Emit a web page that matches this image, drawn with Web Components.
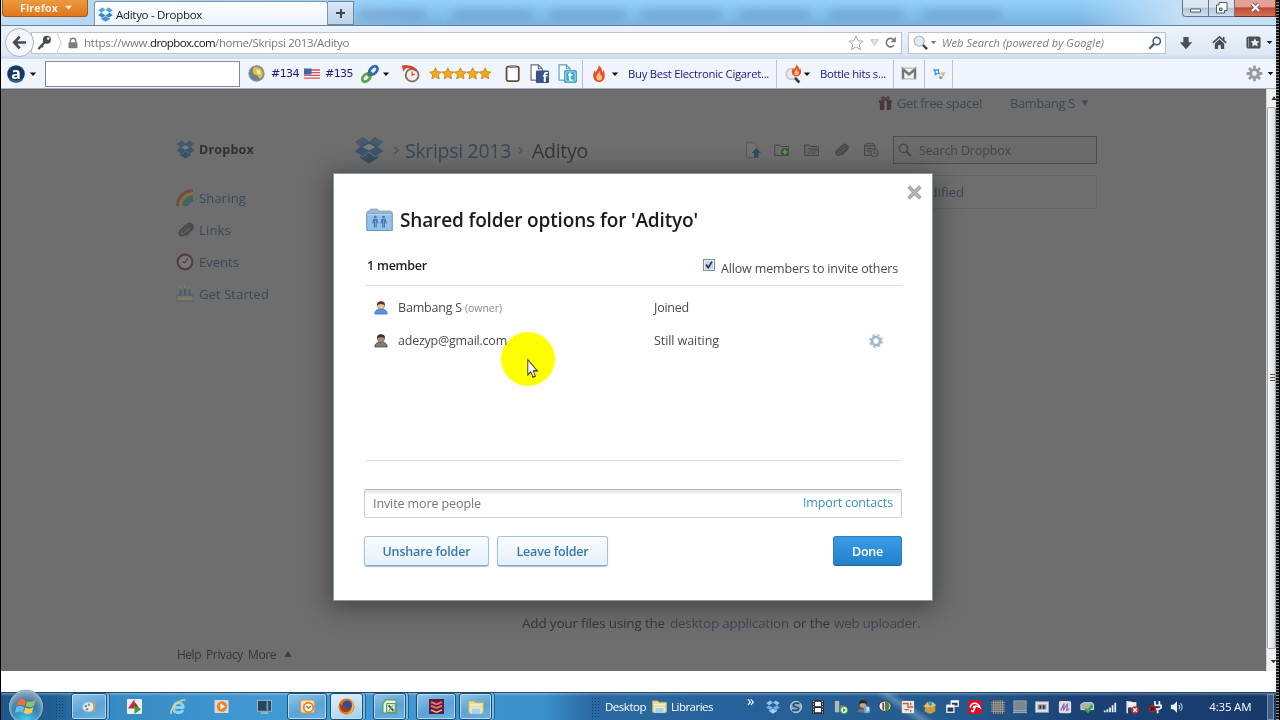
<!DOCTYPE html>
<html lang="en">
<head>
<meta charset="utf-8">
<title>Adityo - Dropbox</title>
<style>
    html, body {
        margin: 0;
        width: 1280px;
        height: 720px;
        overflow: hidden;
        background: #000;
        font-family: "Open Sans", "Noto Sans", sans-serif;
        font-size: 12px;
    }
</style>
</head>
<body>
<desktop-screen></desktop-screen>

<script>
/*            ICONS            */
/* all drawn on a 16x16 grid   */
const dropboxShape = (a, b, c) => `
    <path fill="${a}" d="M4.800 .500 8 3.200 3.400 6.100 .300 3.400zM11.200 .500 15.700 3.400 12.600 6.100 8 3.200z"/>
    <path fill="${b}" d="M.300 8.900 3.400 6.100 8 8.900 4.800 11.500zM15.700 8.900 12.600 6.100 8 8.900 11.200 11.500z"/>
    <path fill="${c}" d="M3.400 11.200 4.800 12.100 8 9.500 11.200 12.100 12.600 11.200V12.700L8 15.700 3.400 12.700z"/>`;

const clip = (c, w) => `<g fill="none" stroke="${c}" stroke-width="${w}" stroke-linecap="round">
    <path d="M5.500 10.500 11 5.200c1.600-1.400 3.200.400 1.800 1.900L7.400 12.200c-2.600 2.300-5.900-.800-3.400-3.500L9.600 3.500c3.200-2.800 7 .900 4.400 4.200L9.500 12"/></g>`;

const person = (hair, skin, body, edge) => `
    <path fill="${body}" stroke="${edge}" d="M1 14.800C1 10.800 3.400 9.400 8 9.400s7 1.400 7 5.400z"/>
    <circle cx="8" cy="5.400" r="4" fill="${skin}" stroke="${edge}" stroke-width=".600"/>
    <path fill="${hair}" d="M3.600 5.600C3 1.600 5.400.400 8 .400s5 1.200 4.400 5.200C11 3.400 9.500 3.600 8 3.600S5 3.400 3.600 5.600z"/>`;

const page = c => `<path fill="#fff" stroke="${c}" d="M.900.700H7L10.300 4V13.500H.900z"/><path fill="none" stroke="${c}" d="M7 .700V4H10.300"/>`;

const flame = `<path fill="#e4502a" d="M7.500 0C8.500 3 5 4.500 4.500 7 3.800 6.500 3.500 5.500 3.600 4.500 1.500 7 1 9.500 1.500 11.500 2.300 14.500 5 16 8 16c4 0 6.600-2.800 6.600-6.200 0-2.300-.800-4-1.600-5.300-.100 1.200-.400 2-1.200 2.500C11.600 4 10.300 1.500 7.500 0z"/>
    <path fill="#fbc27a" d="M8.400 5.500C8.500 8 5 8.600 5 11.500c0 2 1.400 3 3.200 3 2 0 3.400-1.400 3.200-3.300-.100-1-.600-1.700-1.100-2.200-.200.700-.500 1-1 1.200C9.700 8.500 9.500 6.800 8.400 5.500z"/>`;

const star = x => `<path fill="#f3ab12" stroke="#b5770d" stroke-width=".700" d="M${x} .800l1.900 4 4.300.500-3.200 2.900.900 4.300L${x} 10.300l-3.900 2.200.900-4.300L${x - 6.2} 5.300l4.300-.500z"/>`;

const gear = (c, hole) => `<g stroke="${c}" stroke-width="2.600"><path d="M8 .600V15.400M.600 8H15.400M2.800 2.800 13.200 13.200M13.200 2.800 2.800 13.200"/></g>
    <circle cx="8" cy="8" r="5" fill="${c}"/><circle cx="8" cy="8" r="2.300" fill="${hole}"/>`;

const icons = {
    dropbox: dropboxShape('#4ba3df', '#2f86c8', '#3a93d4'),
    dropboxDim: '<path fill="#2e4355" d="M3.400 6.100 8 3.200 12.600 6.100 8 8.900z"/>' + dropboxShape('#3e576b', '#34506a', '#2f4a60') + '<path fill="#75838c" d="M8 4.300 11.500 6.300 8 8.300 4.500 6.300z"/>',
    dropboxTray: dropboxShape('#8cc9f2', '#6cb2e6', '#a4d4f5'),
    caret: '<path d="M3 5.500H13L8 11z"/>',
    caretWide: '<path d="M1.500 2.500H14.500L8 13.500z"/>',
    caretUp: '<path d="M8 4 13 12H3z"/>',
    back: '<path fill="none" stroke="#444b52" stroke-width="2.900" d="M8.200 1.800 2.400 8 8.200 14.200M2.800 8H15"/>',
    key: '<circle cx="10.600" cy="5" r="4.300" fill="#4a4d51"/><circle cx="12" cy="3.700" r="1.300" fill="#fff"/><path stroke="#4a4d51" stroke-width="2.500" d="M9 6.800 1.500 15"/><path stroke="#4a4d51" stroke-width="1.500" d="M4.500 10.500 6.500 13"/>',
    chevron: '<path fill="none" stroke="#c3c8ce" stroke-width="1" d="M5 0 10 8 5 16"/>',
    lock: '<rect x="2" y="7" width="12" height="8" rx="1" fill="#7d7d7d"/><path fill="none" stroke="#7d7d7d" stroke-width="2" d="M4.500 7V4.500C4.500.500 11.500.500 11.500 4.500V7"/>',
    star: '<path fill="#fbfbfb" stroke="#a9a9a9" d="M8 1l2.100 4.700 5 .500-3.800 3.400 1.200 5L8 12l-4.500 2.600 1.200-5L.900 6.200l5-.500z"/>',
    triangle: '<path fill="#e4e4e4" stroke="#a5a5a5" d="M1 3H15L8 13.500z"/>',
    reload: '<path fill="none" stroke="#7b7b7b" stroke-width="2" d="M12.300 11.200A5.200 5.200 0 1 1 12 4.800"/><path fill="#7b7b7b" d="M14.500 1V7.600H8z"/>',
    lens: '<path stroke="#444" stroke-width="2.600" d="M10.500 10.500 15 15"/><circle cx="6.500" cy="6.500" r="5.300" fill="#dcebf4" stroke="#b3b9be" stroke-width="1.400"/>',
    searchGo: '<g fill="none" stroke="#3d6283"><circle cx="10" cy="5.800" r="4.200" stroke-width="1.800"/><path stroke-width="2.600" d="M7 9 1.500 14.500"/></g>',
    download: '<path fill="#4b4f54" d="M5 1H11V7H15L8 15 1 7H5z"/>',
    home: '<path fill="none" stroke="#4b4f54" stroke-width="1.800" d="M.800 8.500 8 2 15.200 8.500"/><path fill="#4b4f54" d="M8 4.500 13 9V15H9.500V11H6.500V15H3V9zM11.500 2H13.300V6L11.500 4.500z"/>',
    bookmarks: '<rect x=".500" y="1.500" width="15" height="13" rx="2" fill="#4b4f54"/><path fill="#e8eef6" d="M9.500 3.500l1.500 3 3.300.400-2.400 2.200.700 3.200-3.100-1.600-3 1.600.600-3.200L4.800 6.900 8 6.500z"/><path stroke="#9aa2aa" d="M2.800 3V13"/>',
    alexa: '<circle cx="8" cy="8" r="7.800" fill="#173b62"/><path fill="#4f8db8" opacity=".600" d="M1 10.500C4 15 12 15 15 10.500A7.500 7.500 0 0 1 1 10.500"/><text x="8" y="12.200" text-anchor="middle" font-size="14" font-weight="bold" font-family="Open Sans" fill="#fff">a</text>',
    globe: '<circle cx="8" cy="8" r="7.200" fill="#6f7f93" stroke="#8d9297"/><path fill="#e2c04b" d="M5 2.500C9 .500 14 3.500 14 8c0 2-1 4-2.500 5C9 12 10 10 8 9.500 4 9 4 5 5 2.500z"/><path fill="#f8e8a0" d="M8 4l3 1 1 3-2 1-2-2z"/>',
    flag: '<rect y="2.500" width="16" height="11" fill="#f4f4f6"/><path stroke="#d2505c" stroke-width="1.300" d="M0 4H16M0 6.700H16M0 9.400H16M0 12.200H16"/><rect y="2.500" width="7.500" height="6" fill="#4163a8"/>',
    links: '<g fill="none" stroke-width="2.500"><ellipse cx="4.800" cy="11.200" rx="2.800" ry="4.400" transform="rotate(45 4.800 11.200)" stroke="#5aa83f"/><ellipse cx="11" cy="4.800" rx="2.800" ry="4.400" transform="rotate(45 11 4.800)" stroke="#2f69b8"/><path stroke="#3a7f74" d="M6 9.800 9.600 6.200"/></g>',
    wayback: '<circle cx="9" cy="9" r="5.700" fill="#f2ece6" stroke="#8d6f64" stroke-width="1.700"/><path fill="none" stroke="#b45546" d="M9 5.500V9L11.500 8"/><path fill="none" stroke="#d8402a" stroke-width="2.200" d="M2 2C6 .800 10 2 12.500 5"/><path fill="#d8402a" d="M0 .500 5 0 1 6z"/>',
    clipboard: '<rect x="2.400" y="1.600" width="11.500" height="13.600" rx="1.500" fill="#fff" stroke="#6b4b37" stroke-width="1.700"/><rect x="5" y=".300" width="6" height="2.500" fill="#8e8e8e"/>',
    pageFb: page('#66727e') + '<rect x="5" y="5.500" width="11" height="10.500" rx="1" fill="#34548b"/><text x="10.500" y="15.500" font-size="11" font-weight="bold" font-family="Open Sans" fill="#fff">f</text>',
    pageTw: page('#57a3bf') + '<rect x="5" y="5" width="11" height="11" rx="1.500" fill="#3fa9ce"/><rect x="6.500" y="6.500" width="8" height="8" rx="1.500" fill="none" stroke="#9bd5e8"/><text x="8.200" y="14" font-size="10" font-weight="bold" font-family="Open Sans" fill="#fff">t</text>',
    flame: flame,
    flameLens: '<circle cx="6" cy="8" r="4.800" fill="#e9ecef" stroke="#c4c7cb" stroke-width="1.500"/><path stroke="#3c3c3c" stroke-width="2.500" d="M9.500 11.500 13.500 15.500"/><g transform="translate(5.500 -.500) scale(.660)">' + flame + '</g>',
    gmail: '<rect x=".800" y="2" width="14.400" height="12" fill="#f5f5f5"/><path fill="none" stroke="#777" stroke-width="2.500" d="M2 14V3.500L8 9 14 3.500V14"/><path stroke="#aaa" d="M1 2.300H15M1 13.700H15"/>',
    sparkle: '<path fill="#3aa5dd" d="M1 2 5 3 8 2 8 6 10 9 6 9 3 11 3 7z"/><circle cx="5.600" cy="6" r="1.300" fill="#fff"/><path fill="#eeb15a" d="M10 6 13 7 16 6 14 9 14 12 11.500 10z"/><circle cx="10" cy="13" r="2" fill="#8b99a8"/>',
    gear: gear('#999b9e', '#eef2fb'),
    gearBlue: '<circle cx="8" cy="8" r="6.500" fill="none" stroke="#b4c8da" stroke-width="3" stroke-dasharray="3.100 2"/><circle cx="8" cy="8" r="4.600" fill="#dfe9f2" stroke="#9db6cd" stroke-width="2.600"/><circle cx="8" cy="8" r="2.200" fill="#fff"/>',

    gift: '<path fill="#472d35" d="M2 7H14V15H2zM1 4.500H15V7.500H1z"/><path fill="#77737a" d="M6.700 4.500H9.300V15H6.700z"/><path fill="none" stroke="#4a2f37" stroke-width="1.500" d="M8 4.500C2 4 4 0 6 1.500 7 2.200 8 4 8 4.500 8 4 9 2.200 10 1.500 12 0 14 4 8 4.500z"/>',
    rainbow: '<g fill="none" stroke-width="2.800"><path stroke="#74463f" d="M1.500 15C1.500 8 6 2 15 1.500"/><path stroke="#85733e" d="M4 15C4.400 9.500 8 5 15 4.200"/><path stroke="#3e6547" d="M6.500 15C7 11 10 8 15 7"/><path stroke="#3c5c73" d="M9.300 15C10 12 12 10.500 15 9.700"/></g>',
    linkDim: clip('#454545', 1.9),
    event: '<circle cx="8" cy="8" r="6.500" fill="#7c7c7c" stroke="#573232" stroke-width="2"/><path fill="none" stroke="#454545" stroke-width="1.300" d="M10.500 4.500 8 8.500 5.500 8"/>',
    started: '<path fill="#747571" stroke="#5a6066" d="M1 9H15V14.500H1z"/><path stroke="#405a70" stroke-width="1.800" d="M4 9V4M8 9V3.500M12 9V4"/><path stroke="#858263" stroke-width="1.500" d="M3.200 2.500H4.800M7.200 1.500H8.800M11.200 2.500H12.800M1 12H15"/>',
    crumb: '<path fill="none" stroke="#4e4e4e" stroke-width="2.600" d="M4.500 2.500 11 8 4.500 13.500"/>',
    upload: '<path fill="#747474" stroke="#505050" stroke-width=".800" d="M1.500 .700H8.500L12 4V15.300H1.500z"/><path fill="#244764" d="M11.300 6 16 11H13.500V15.500H9V11H6.600z"/>',
    newFolder: '<path fill="#6c6c6c" stroke="#404040" d="M.700 13.500V3H5.500L7 4.500H14.500V13.500z"/><circle cx="11" cy="10" r="4" fill="#35512f"/><path stroke="#809078" stroke-width="1.500" d="M11 7.500V12.500M8.500 10H13.500"/>',
    shareFolder: '<path fill="#676767" stroke="#424242" d="M.700 13.500V3H5.500L7 4.500H14.500V13.500z"/><path fill="none" stroke="#474747" d="M4 12 8 6.500M7 12 11 6.500M9.500 12 13.500 7M4 7H14"/>',
    trash: '<path fill="#686868" stroke="#404040" d="M1.500 3.500C1.500.500 12 .500 12 3.500V13.500H1.500zM1.500 3.800H12"/><circle cx="11.500" cy="11" r="3.700" fill="#6c6c6c" stroke="#3e3e3e"/><path stroke="#404040" d="M4 6.500H9M4 9H7"/><path fill="none" stroke="#404040" d="M11.500 9V11.500H13.500"/>',
    searchDim: '<g fill="none" stroke="#434343"><circle cx="6.200" cy="6.200" r="4.700" stroke-width="1.700"/><path stroke-width="2.400" d="M9.700 9.700 15 15"/></g>',

    sharedFolder: '<path fill="#9dbcd3" stroke="#7f9db5" stroke-width=".500" d="M.500 15V2.800L1.200 2H2L2.700.700H6.800L7.700 2H14.800L15.500 2.800V15z"/><path fill="#93c3ec" stroke="#648db3" stroke-width=".500" d="M.500 3.800H15.500V15H.500z"/><path stroke="#c8e4fb" stroke-width=".500" d="M.800 4.300H15.200"/><g fill="#4a78a8"><circle cx="5.500" cy="6" r=".900"/><circle cx="10.400" cy="6" r=".900"/></g><path fill="none" stroke="#4a78a8" stroke-width=".700" d="M5 13V7.600M6 13V7.600M3.900 10.200 4.600 7.500H6.400L7.100 10.200M9.900 13V7.600M10.900 13V7.600M8.800 10.200 9.500 7.500H11.300L12 10.200"/>',
    owner: person('#5b3420', '#f4c28f', '#5a95e3', '#3b6fb4'),
    member: person('#38332e', '#a28f7d', '#807c75', '#504c47'),
    close: '<path stroke="#a4a4a4" stroke-width="4" d="M1.700 1.700 14.300 14.300M14.300 1.700 1.700 14.300"/><path stroke="#bcbcbc" stroke-width="1.500" d="M2 2 14 14M14 2 2 14"/>',
    check: '<rect x=".600" y=".600" width="14.800" height="14.800" fill="#e9eef3" stroke="#788696" stroke-width="1.200"/><rect x="2.600" y="2.600" width="10.800" height="10.800" fill="#cbd5e2"/><path fill="none" stroke="#273c66" stroke-width="2.400" d="M4 7.500 7 11.500 12 3.500"/>',
    pointer: '<path fill="#fff" stroke="#222" stroke-width=".900" d="M3 .600V13.500L6.200 10.800 8.500 15.400 11 14.400 8.900 10H13.200z"/>',

    paint: '<ellipse cx="7" cy="8.500" rx="6.500" ry="5.300" fill="#dfeaf2" stroke="#a3bccd"/><g><circle cx="4" cy="7.500" r="1.400" fill="#4d9bd0"/><circle cx="7.500" cy="6" r="1.300" fill="#67b556"/><circle cx="5.500" cy="11" r="1.300" fill="#d0675a"/></g><path stroke="#d09c55" stroke-width="2.200" d="M13 2V14"/>',
    cards: '<rect width="16" height="16" rx="1" fill="#e8eef1"/><path fill="#c92a2f" d="M8 0V10H1z"/><path fill="#3f9b3a" d="M8 5 15 11 8 16z"/><path fill="#8f1f25" d="M8 3 12 8H8z"/>',
    ie: '<path fill="none" stroke="#8ed4f2" stroke-width="3" d="M3 8.500H13C13 1.500 3.500 2.500 3.500 9 3.500 14.500 11 15 12.800 11"/><path fill="none" stroke="#ead374" stroke-width="1.500" d="M1.500 15C-1 12 8 0 15.500 1"/>',
    media: '<rect x=".500" y="1" width="15" height="14" rx="1" fill="#d3dbe0"/><circle cx="8.500" cy="8" r="5.500" fill="#ee8420"/><path fill="#fff" d="M6.800 4.800 12 8 6.800 11.200z"/>',
    monitor: '<rect x=".500" y="1.500" width="15" height="11.500" fill="#24465e" stroke="#a7b6c0"/><path fill="#6c9dbc" d="M10 2.500H12V12H10z"/><path stroke="#aebac3" stroke-width="1.500" d="M4 15H12"/>',
    outlook: '<rect x=".500" y="1" width="15" height="14" rx="3" fill="#efdfb4" stroke="#cf9c43"/><circle cx="9" cy="9" r="5" fill="#fff" stroke="#e48a2a" stroke-width="2"/><path fill="none" stroke="#c56720" stroke-width="1.500" d="M6.500 7.500 9 10 11.500 7.500"/>',
    firefox: '<circle cx="8" cy="8" r="7.500" fill="#e5761c"/><circle cx="8.500" cy="6.800" r="4.500" fill="#2f4e93"/><path fill="#a83d18" d="M1 5C3 7 4 7 7 7.500 5.500 11 9.500 12 13 8.500 12 14 4 15 2.500 10z"/><path fill="#f7bd3b" d="M13 2.500C17 8 14 15 8 15.500 13 13 14 8 13 2.500z"/>',
    excel: '<path fill="#e8f4e6" stroke="#5ba057" stroke-width="1.300" d="M4.500 1H15V15H1V4.500z"/><rect x="5" y="5" width="9" height="9" fill="#fff" stroke="#397c42"/><path stroke="#236a35" stroke-width="2.200" d="M7 6.800 12.300 12.500"/><path stroke="#67a975" stroke-width="1.500" d="M12 6.800 7 12.500"/>',
    purple: '<rect width="16" height="16" fill="#5c1950"/><path fill="none" stroke="#eb7547" stroke-width="2" d="M2 3.500C5 3.500 6 5.500 8 5.500S11 3.500 14 3.500M2 7.500C5 7.500 6 9.500 8 9.500S11 7.500 14 7.500"/><path fill="none" stroke="#f2c45e" stroke-width="1.500" d="M2 12C5 12 6 14 8 14S11 12 14 12"/>',
    folder: '<path fill="#e8dc9a" stroke="#c0ac61" d="M.600 14V2H6L7.500 3.500H15.400V14z"/><path fill="#a8d2e4" stroke="#e9f3f1" d="M3 15V9H13V15"/><path stroke="#f5efc5" stroke-width="1.500" d="M2 6H14"/>',

    skype: '<circle cx="8" cy="8" r="6.500" fill="#8caec6" stroke="#bdd3e1"/><path fill="none" stroke="#284d70" stroke-width="2" d="M12 4C5 2 2 7 8 8S11 13 3.500 11.500"/>',
    film: '<rect x="1.500" y=".500" width="13" height="15" fill="#1c1c1c"/><path fill="#fff" d="M4.500 2H11.500V7H4.500zM4.500 9H11.500V14H4.500z"/><path stroke="#fff" stroke-dasharray="1.500 1.500" d="M3 1V15M13 1V15"/>',
    device: '<path fill="#aeb8b7" d="M1 1H6V14H1z"/><path fill="#707f7a" d="M7 6H12V14H7z"/><circle cx="11.500" cy="11.500" r="4" fill="#e8ffe5" stroke="#469846"/><path fill="#31852e" d="M10.500 9 13.500 11.500 10.500 14z"/>',
    agent: person('#252525', '#dca27e', '#62788f', '#394a5a') + '<rect x="9" y="7" width="7" height="8" rx="2" fill="#6ba3c9"/><path fill="none" stroke="#e2f0fa" stroke-width="1.500" d="M11 9H14V11.500H12.500V13"/>',
    eye: '<ellipse cx="8" cy="7" rx="7" ry="6" fill="#efefef" stroke="#222"/><path fill="#478942" d="M8 1C15 1 15 11 8 14z"/><path stroke="#913369" stroke-width="2" d="M6 3V11"/>',
    schedule: '<rect x="1" y="1" width="14" height="14" fill="#ece8e5"/><path fill="none" stroke="#c16342" stroke-width="1.500" d="M2 4H8V8H14M4 11H9M11 3V6M11 11V14"/>',
    box: '<path fill="#cd9a3d" d="M2 6 8 9 14 6V13L8 16 2 13z"/><path fill="#e7bf64" d="M2 6 5 2 8 5 11 2 15 6 9 9 8 8 7 9 0 7z"/><path fill="#4a9bc5" d="M5 3 9 1 11 5 8 7z"/>',
    windows: '<g fill="#233a56" stroke="#f5f5f5" stroke-width="1.500"><rect x="6" y="1" width="8" height="6"/><rect x="1" y="6" width="8" height="8"/></g><path fill="#fff" d="M1 6H9V8.500H1zM6 1H14V3H6z"/>',
    avira: '<rect width="16" height="16" rx="1" fill="#d41424"/><path fill="none" stroke="#fff" stroke-width="1.800" d="M2.500 8.500C4 2.500 11 2 13.500 8.500 10.500 6.500 7.500 6.500 5.500 9M8.500 7 6.500 12C6 14 3.500 13 4.500 11.500"/>',
    grid: '<rect x=".500" y=".500" width="15" height="15" fill="#4d4f50"/><path stroke="#b4b4b1" stroke-width=".800" d="M0 3H16M0 5.500H16M0 8H16M0 10.500H16M0 13H16M3 0V16M5.500 0V16M8 0V16M10.500 0V16M13 0V16"/>',
    laptop: '<rect x="1" y="1" width="14" height="11" fill="#7b8790" stroke="#a0abb5"/><path fill="#98a7b5" d="M0 13H16V15H0z"/>',
    meter: '<rect x=".500" y="2" width="15" height="12" fill="#dfe4e6" stroke="#9da9b0"/><rect x="3" y="5" width="10" height="6" fill="#8d999f"/><path stroke="#333" stroke-width="2" d="M6 6V10M10 6V10"/>',
    note: '<rect x="1" y="1" width="14" height="14" rx="2" fill="#e3dae8"/><path fill="none" stroke="#946fae" stroke-width="1.500" d="M3 12 7 4 6 12 11 4 10 12 13 10"/>',
    drive: '<path fill="#a9b1b2" stroke="#dce2e2" d="M1 5 4 3H14L15.500 5V11H1z"/><path fill="none" stroke="#43a734" stroke-width="3" d="M6 10 9 13 14 6"/>',
    signal: '<path stroke="#e9f1f7" stroke-width="2" d="M2 14V12M5 14V10.500M8 14V8.500M11 14V6M14 14V3"/>',
    flagX: '<path stroke="#f2f2f2" stroke-width="1.700" d="M2.500 1V15"/><path fill="#f2f2f2" d="M3 2C7 0 8 4 13 2V9C8 10 7 7 3 9z"/><circle cx="11.500" cy="11.500" r="4.300" fill="#d12e2b"/><path stroke="#fff" stroke-width="1.500" d="M9.500 9.500 13.500 13.500M13.500 9.500 9.500 13.500"/>',
    plug: '<path fill="none" stroke="#f0f0f0" stroke-width="2" d="M8 1V5M13 1V5M7 6H15V9C13 11 8 11 7 9M11 10V15"/><circle cx="5" cy="10" r="4.300" fill="#a92323"/><path stroke="#222" stroke-width="1.500" d="M3 8 7 12M7 8 3 12"/>',
    sound: '<path fill="#edf3f7" d="M1 5.500H4L8 1.500V14.500L4 10.500H1z"/><path fill="none" stroke="#bcd0df" stroke-width="1.200" d="M10 5.500C11.500 7 11.500 9 10 10.500M12 3.500C14.500 6 14.500 10 12 12.500"/>'
};

/*       SMALL ELEMENTS        */
class UiIcon extends HTMLElement {
    connectedCallback() {
        if (this.shadowRoot) return;
        let size = this.getAttribute('size') || 16;
        let height = this.getAttribute('height') || size;
        this.attachShadow({mode: 'open'}).innerHTML = `
            <style>
                :host { display: block; flex: none; width: ${size}px; height: ${height}px; margin-left: ${this.getAttribute('gap') || 0}px; }
                svg { display: block; width: 100%; height: 100%; overflow: visible; }
            </style>
            <svg viewBox="0 0 16 16" preserveAspectRatio="none" fill="currentColor">${icons[this.getAttribute('name')]}</svg>`;
    }
}

// one line of text, tracked so that it fills the given width
class UiLabel extends HTMLElement {
    connectedCallback() {
        if (this.shadowRoot) return;
        let width = Number(this.getAttribute('width'));
        this.attachShadow({mode: 'open'}).innerHTML = `
            <style>
                :host { display: block; flex: none; white-space: nowrap; width: ${width}px; margin-left: ${this.getAttribute('gap') || 0}px; }
                span { display: inline-block; }
            </style>
            <span><slot></slot></span>`;
        let span = this.shadowRoot.querySelector('span');
        let natural = span.getBoundingClientRect().width;
        if (natural > 0) {
            span.style.letterSpacing = (width - natural) / this.textContent.length + 'px';
        }
    }
}

class UiButton extends HTMLElement {
    connectedCallback() {
        this.attachShadow({mode: 'open'}).innerHTML = `
            <style>
                :host { display: block; flex: none; }
                button {
                    display: flex;
                    align-items: center;
                    justify-content: center;
                    box-sizing: border-box;
                    width: 100%;
                    height: 30px;
                    padding: 0;
                    border: 1px solid #a3c3da;
                    border-bottom-color: #87abc5;
                    border-radius: 3px;
                    background: linear-gradient(#fbfdff, #e3f1fb);
                    box-shadow: 0 1px 1px #a5bfd0;
                    font: 600 12.5px "Open Sans", sans-serif;
                    color: #3a77ab;
                }
                :host([primary]) button {
                    border-color: #2a7fc2;
                    border-bottom-color: #1e639c;
                    background: linear-gradient(#3a9be6, #2480cb);
                    box-shadow: none;
                    color: #fff;
                }
            </style>
            <button><slot></slot></button>`;
    }
}

/*           BROWSER           */
class BrowserTabs extends HTMLElement {
    connectedCallback() {
        this.attachShadow({mode: 'open'}).innerHTML = `
            <style>
                :host {
                    display: flex;
                    box-sizing: border-box;
                    height: 26px;
                    position: relative;
                    overflow: hidden;
                    border-bottom: 1px solid #64839f;
                    background: linear-gradient(90deg, #c4dff4 0, #b5d6f1 90px, transparent 420px, transparent 1080px, #c3e0f5 1180px), linear-gradient(#92d0fb, #7ab2e0);
                }
                /* titles of other windows seen through the glass */
                .smudge { position: absolute; top: 10px; height: 9px; background: #5f89b5; opacity: .45; filter: blur(4px); }
                .firefox {
                    display: flex;
                    align-items: center;
                    width: 86px;
                    height: 17px;
                    margin-left: 1px;
                    padding-bottom: 1px;
                    box-sizing: border-box;
                    border: 1px solid #a85a17;
                    border-top: 0;
                    border-radius: 0 0 4px 4px;
                    background: linear-gradient(#ec9a40, #e2761a);
                    color: #fdf3e6;
                    font-size: 10.5px;
                    font-weight: 700;
                }
                .tab {
                    display: flex;
                    align-items: center;
                    width: 234px;
                    height: 25px;
                    margin: 1px 0 0 6px;
                    border: 1px solid #8096ab;
                    border-bottom: 0;
                    border-radius: 3px 3px 0 0;
                    background: linear-gradient(#fcfdff, #edf3fb);
                    box-sizing: border-box;
                    color: #1b1b1b;
                    font-size: 11.5px;
                }
                .add {
                    width: 26px;
                    height: 24px;
                    margin-top: 1px;
                    border: 1px solid #6f8aa5;
                    border-left: 0;
                    box-sizing: border-box;
                    background: linear-gradient(#d7e7f5, #bdd3e8);
                    display: flex;
                    align-items: center;
                    justify-content: center;
                }
                .add i { width: 9px; height: 9px; background: linear-gradient(#444, #444) center / 9px 2px no-repeat, linear-gradient(#444, #444) center / 2px 9px no-repeat; }
                .controls { display: flex; margin-left: auto; height: 17px; position: relative; }
                .controls span {
                    display: flex;
                    align-items: center;
                    justify-content: center;
                    box-sizing: border-box;
                    width: 26px;
                    border: 1px solid #62798f;
                    border-width: 0 1px 1px 0;
                    background: linear-gradient(#dbe8f3 45%, #b3c6d8 50%, #cedeed);
                }
                .controls span:first-child { width: 27px; border-left-width: 1px; border-radius: 0 0 0 4px; }
                .controls .close { width: 41px; background: linear-gradient(#e3a295 40%, #c54a33 50%, #d27058); border-color: #712f28; }
                .controls svg { width: 13px; height: 12px; }
            </style>
            <i class="smudge" style="left:358px;width:66px"></i>
            <i class="smudge" style="left:452px;width:80px"></i>
            <i class="smudge" style="left:548px;width:76px"></i>
            <i class="smudge" style="left:640px;width:80px"></i>
            <i class="smudge" style="left:738px;width:70px"></i>
            <i class="smudge" style="left:828px;width:74px"></i>
            <i class="smudge" style="left:922px;width:78px"></i>
            <div class="firefox"><ui-label gap="17" width="38">Firefox</ui-label><ui-icon name="caret" gap="5" size="11"></ui-icon></div>
            <div class="tab"><ui-icon name="dropbox" gap="3" size="15"></ui-icon><ui-label gap="3" width="86">Adityo - Dropbox</ui-label></div>
            <div class="add"><i></i></div>
            <div class="controls">
                <span><svg viewBox="0 0 13 12"><path fill="#fff" stroke="#4c5968" d="M1.500 7H11.500V10H1.500z"/></svg></span>
                <span><svg viewBox="0 0 13 12"><path fill="#fff" fill-rule="evenodd" stroke="#4c5968" d="M4 .500H12V8.500H9.500V11H1.500V3H4zM4.500 6V8.500H7V6z"/></svg></span>
                <span class="close"><svg viewBox="0 0 13 12"><path stroke="#654" stroke-width="4" d="M3 2 10 9M10 2 3 9"/><path stroke="#fff" stroke-width="2.300" d="M3 2 10 9M10 2 3 9"/></svg></span>
            </div>`;
    }
}

class BrowserNav extends HTMLElement {
    connectedCallback() {
        this.attachShadow({mode: 'open'}).innerHTML = `
            <style>
                :host {
                    display: flex;
                    align-items: center;
                    height: 33px;
                    background: linear-gradient(#edf3fb, #dce8f5 85%, #c9d7e6);
                    color: #77797c;
                }
                .back {
                    display: flex;
                    align-items: center;
                    justify-content: center;
                    box-sizing: border-box;
                    width: 29px;
                    height: 29px;
                    margin-left: 4px;
                    border: 1px solid #a4b2c2;
                    border-radius: 50%;
                    background: #f4f8fd;
                    z-index: 1;
                }
                .field {
                    display: flex;
                    align-items: center;
                    box-sizing: border-box;
                    height: 22px;
                    border: 1px solid #b5c3d2;
                    background: #fff;
                }
                .url { width: 871px; margin-left: -3px; font-size: 11.5px; }
                .search { width: 258px; margin-left: 6px; font-size: 11px; font-style: italic; }
                .host { color: #111; }
            </style>
            <div class="back"><ui-icon name="back" size="15"></ui-icon></div>
            <div class="field url">
                <ui-icon name="key" gap="5" size="15"></ui-icon>
                <ui-icon name="chevron" gap="1" size="13" height="19"></ui-icon>
                <ui-icon name="lock" gap="1" size="12"></ui-icon>
                <ui-label gap="5" width="66">https://www.</ui-label><ui-label class="host" width="65">dropbox.com</ui-label><ui-label width="134">/home/Skripsi 2013/Adityo</ui-label>
                <ui-icon name="star" gap="499" size="16"></ui-icon>
                <ui-icon name="triangle" gap="6" size="9"></ui-icon>
                <ui-icon name="reload" gap="5" size="13"></ui-icon>
            </div>
            <div class="field search">
                <ui-icon name="lens" gap="4" size="15"></ui-icon>
                <ui-icon name="caret" gap="1" size="9"></ui-icon>
                <ui-label gap="4" width="162">Web Search (powered by Google)</ui-label>
                <ui-icon name="searchGo" gap="44" size="14"></ui-icon>
            </div>
            <ui-icon name="download" gap="13" size="14"></ui-icon>
            <ui-icon name="home" gap="19" size="15"></ui-icon>
            <ui-icon name="bookmarks" gap="19" size="15"></ui-icon>
            <ui-icon name="caret" gap="4" size="9" style="color:#222"></ui-icon>`;
    }
}

class AddonBar extends HTMLElement {
    connectedCallback() {
        this.attachShadow({mode: 'open'}).innerHTML = `
            <style>
                :host {
                    display: flex;
                    align-items: center;
                    box-sizing: border-box;
                    height: 30px;
                    background: #f0f4fd;
                    border-bottom: 1px solid #aeb4bc;
                    color: #111;
                }
                ui-label { color: #1c1782; font-size: 11.3px; }
                .rank { font: 11px "DejaVu Sans", sans-serif; }
                .entry { box-sizing: border-box; width: 195px; height: 26px; margin-left: 7px; border: 1px solid #868b93; background: #fff; }
                hr { flex: none; width: 1px; height: 28px; margin: 0; border: 0; background: #b9c1cc; }
                .stars { flex: none; width: 63px; height: 13px; margin-left: 9px; }
            </style>
            <ui-icon name="alexa" gap="6" size="18"></ui-icon>
            <ui-icon name="caret" gap="3" size="10"></ui-icon>
            <div class="entry"></div>
            <ui-icon name="globe" gap="8" size="17"></ui-icon>
            <ui-label class="rank" gap="6" width="28">#134</ui-label>
            <ui-icon name="flag" gap="5" size="16"></ui-icon>
            <ui-label class="rank" gap="5" width="28">#135</ui-label>
            <ui-icon name="links" gap="8" size="18"></ui-icon>
            <ui-icon name="caret" gap="2" size="10"></ui-icon>
            <ui-icon name="wayback" gap="11" size="18"></ui-icon>
            <svg class="stars" viewBox="0 0 66 13.600">${star(6.8)}${star(19.8)}${star(32.8)}${star(45.8)}${star(58.8)}</svg>
            <ui-icon name="clipboard" gap="12" size="17"></ui-icon>
            <ui-icon name="pageFb" gap="9" size="19"></ui-icon>
            <ui-icon name="pageTw" gap="9" size="19"></ui-icon>
            <hr style="margin-left:5px">
            <ui-icon name="flame" gap="9" size="14" height="17"></ui-icon>
            <ui-icon name="caret" gap="4" size="10"></ui-icon>
            <ui-label gap="8" width="141">Buy Best Electronic Cigaret...</ui-label>
            <hr style="margin-left:7px">
            <ui-icon name="flameLens" gap="8" size="17" height="18"></ui-icon>
            <ui-icon name="caret" gap="0" size="10"></ui-icon>
            <ui-label gap="8" width="66">Bottle hits s...</ui-label>
            <hr style="margin-left:7px">
            <ui-icon name="gmail" gap="7" size="16" height="15"></ui-icon>
            <hr style="margin-left:7px">
            <ui-icon name="sparkle" gap="7" size="14" height="13"></ui-icon>
            <hr style="margin-left:6px">
            <ui-icon name="gear" gap="293" size="17"></ui-icon>
            <ui-icon name="caret" gap="3" size="9"></ui-icon>`;
    }
}

class SideScroll extends HTMLElement {
    connectedCallback() {
        this.attachShadow({mode: 'open'}).innerHTML = `
            <style>
                :host { display: flex; flex-direction: column; align-items: flex-end; width: 10px; background: #f0f1f3; border-left: 1px solid #d4d4d4; box-sizing: border-box; color: #333; }
                ui-icon { margin: 5px -2px; }
                .thumb { display: flex; align-items: center; justify-content: flex-end; flex: 1; width: 9px; border: 1px solid #a2a5a9; border-radius: 2px; box-sizing: border-box; background: linear-gradient(90deg, #fcfcfc, #d7d9dc); }
                .grip { width: 5px; height: 8px; background: repeating-linear-gradient(#555 0 1px, transparent 1px 3px); }
            </style>
            <ui-icon name="caretUp" size="8"></ui-icon>
            <div class="thumb"><span class="grip"></span></div>
            <ui-icon name="caret" size="9" style="margin-top:8px"></ui-icon>`;
    }
}

/*        DROPBOX PAGE         */
class DropboxPage extends HTMLElement {
    connectedCallback() {
        this.attachShadow({mode: 'open'}).innerHTML = `
            <style>
                :host {
                    display: block;
                    flex: 1;
                    min-width: 0;
                    background: #6e6e6e;
                    border-top: 1px solid #626262;
                    box-sizing: border-box;
                    overflow: hidden;
                    font-size: 13px;
                    color: #363636;
                    --link: #384857;
                }
                .row { display: flex; align-items: center; }
                ui-icon { opacity: .85; }
                .account { height: 26px; color: var(--link); }
                .columns { display: grid; grid-template-columns: 177px 744px; margin: 17px 0 0 175px; }
                .side .row { height: 32px; color: var(--link); }
                .side .row.current { margin-bottom: 17px; color: #303030; font-weight: 700; font-size: 12.5px; }
                .crumbs { height: 34px; font-size: 19.5px; }
                .crumbs .parent, .hint .link { color: var(--link); }
                .search { box-sizing: border-box; width: 204px; height: 28px; margin-left: 14px; border: 1px solid #4d4d4d; background: #6b6b6b; font-size: 12.5px; color: #444; }
                .head { justify-content: flex-end; height: 34px; margin-top: 8px; box-sizing: border-box; border: 1px solid #646464; color: var(--link); }
                .head ui-label { margin-right: 132px; }
                .hint { margin: 404px 0 0 169px; height: 20px; font-size: 13.5px; }
                .legal { height: 20px; margin: 11px 0 0 176px; font-size: 12px; }
            </style>
            <div class="row account">
                <ui-icon name="gift" gap="877" size="15"></ui-icon>
                <ui-label gap="4" width="85">Get free space!</ui-label>
                <ui-label gap="28" width="65">Bambang S</ui-label>
                <ui-icon name="caretWide" gap="6" size="8"></ui-icon>
            </div>
            <div class="columns">
                <div class="side">
                    <div class="row current"><ui-icon name="dropboxDim" size="19"></ui-icon><ui-label gap="4" width="55">Dropbox</ui-label></div>
                    <div class="row"><ui-icon name="rainbow" size="18"></ui-icon><ui-label gap="5" width="47">Sharing</ui-label></div>
                    <div class="row"><ui-icon name="linkDim" size="18"></ui-icon><ui-label gap="5" width="32">Links</ui-label></div>
                    <div class="row"><ui-icon name="event" size="18"></ui-icon><ui-label gap="5" width="40">Events</ui-label></div>
                    <div class="row"><ui-icon name="started" size="18"></ui-icon><ui-label gap="5" width="70">Get Started</ui-label></div>
                </div>
                <div>
                    <div class="row crumbs">
                        <ui-icon name="dropboxDim" gap="1" size="30" height="28"></ui-icon>
                        <ui-icon name="crumb" gap="8" size="9"></ui-icon>
                        <ui-label class="parent" gap="4" width="106">Skripsi 2013</ui-label>
                        <ui-icon name="crumb" gap="5" size="9"></ui-icon>
                        <ui-label gap="7" width="56">Adityo</ui-label>
                        <ui-icon name="upload" gap="157" size="16"></ui-icon>
                        <ui-icon name="newFolder" gap="13" size="16"></ui-icon>
                        <ui-icon name="shareFolder" gap="14" size="16"></ui-icon>
                        <ui-icon name="linkDim" gap="13" size="16"></ui-icon>
                        <ui-icon name="trash" gap="14" size="16"></ui-icon>
                        <div class="row search"><ui-icon name="searchDim" gap="4" size="14"></ui-icon><ui-label gap="7" width="92">Search Dropbox</ui-label></div>
                    </div>
                    <div class="row head"><ui-label width="54">Modified</ui-label></div>
                    <div class="row hint">
                        <ui-label width="143">Add your files using the</ui-label>
                        <ui-label class="link" gap="5" width="119">desktop application</ui-label>
                        <ui-label gap="4" width="37">or the</ui-label>
                        <ui-label class="link" gap="4" width="83">web uploader</ui-label><ui-label width="3">.</ui-label>
                    </div>
                </div>
            </div>
            <div class="row legal">
                <ui-label width="24">Help</ui-label>
                <ui-label gap="5" width="37">Privacy</ui-label>
                <ui-label gap="5" width="28">More</ui-label>
                <ui-icon name="caretUp" gap="6" size="12"></ui-icon>
            </div>`;
    }
}

class ShareDialog extends HTMLElement {
    connectedCallback() {
        this.attachShadow({mode: 'open'}).innerHTML = `
            <style>
                :host {
                    display: block;
                    box-sizing: border-box;
                    width: 600px;
                    height: 428px;
                    padding: 0 30px 0 31px;
                    border: 1px solid #8c979f;
                    background: #fff;
                    box-shadow: 0 0 3px #4c5963, 0 4px 24px 3px rgba(0, 0, 0, .38);
                    font-size: 12.5px;
                    color: #4a4a4a;
                }
                .row { display: flex; align-items: center; }
                .top { height: 20px; padding-top: 8px; justify-content: flex-end; }
                .top ui-icon { margin-right: -20px; }
                h2 { height: 28px; margin: 4px 0 0 1px; font-size: 19px; font-weight: 600; color: #1b1b1b; }
                .summary { height: 52px; box-sizing: border-box; padding-top: 11px; border-bottom: 1px solid #dcdcdc; }
                .summary .count { color: #222; font-weight: 600; }
                .members { height: 175px; border-bottom: 1px solid #dfdfdf; padding-top: 5px; box-sizing: border-box; }
                .members .row { height: 33px; display: grid; grid-template-columns: 33px 256px 1fr 14px 19px; }
                .note { font-size: 10.5px; color: #8b8b8b; }
                .invite {
                    box-sizing: border-box;
                    width: 538px;
                    height: 29px;
                    margin: 28px 0 0 -1px;
                    border: 1px solid #d2d2d2;
                    border-top-color: #b5b5b5;
                    border-radius: 2px;
                    box-shadow: inset 0 3px 3px #e6e6e6;
                    color: #777;
                }
                .invite .link { color: #3c8fbc; margin-bottom: 3px; }
                .buttons { margin: 18px 0 0 -1px; width: 538px; }
            </style>
            <div class="row top"><ui-icon name="close" size="15"></ui-icon></div>
            <h2 class="row"><ui-icon name="sharedFolder" size="27" height="24"></ui-icon><ui-label gap="7" width="298">Shared folder options for 'Adityo'</ui-label></h2>
            <div class="row summary">
                <ui-label class="count" gap="2" width="60">1 member</ui-label>
                <ui-icon name="check" gap="276" size="12"></ui-icon>
                <ui-label gap="6" width="177" style="padding-top:6px">Allow members to invite others</ui-label>
            </div>
            <div class="members">
                <div class="row">
                    <ui-icon name="owner" gap="9" size="14"></ui-icon>
                    <div class="row" style="display:flex"><ui-label width="64">Bambang S</ui-label><ui-label class="note" gap="3" width="37">(owner)</ui-label></div>
                    <ui-label width="35">Joined</ui-label>
                </div>
                <div class="row">
                    <ui-icon name="member" gap="9" size="14"></ui-icon>
                    <ui-label width="109">adezyp@gmail.com</ui-label>
                    <ui-label width="65">Still waiting</ui-label>
                    <ui-icon name="gearBlue" size="14"></ui-icon>
                </div>
            </div>
            <div class="row invite">
                <ui-label gap="8" width="108">Invite more people</ui-label>
                <ui-label class="link" gap="322" width="90">Import contacts</ui-label>
            </div>
            <div class="row buttons">
                <ui-button style="width:125px"><ui-label width="88">Unshare folder</ui-label></ui-button>
                <ui-button style="width:111px;margin-left:8px"><ui-label width="72">Leave folder</ui-label></ui-button>
                <ui-button primary style="width:69px;margin-left:auto"><ui-label width="31">Done</ui-label></ui-button>
            </div>`;
    }
}

/*           TASKBAR           */
class TaskButton extends HTMLElement {
    connectedCallback() {
        this.attachShadow({mode: 'open'}).innerHTML = `
            <style>
                :host { display: flex; flex: none; align-items: center; justify-content: center; box-sizing: border-box; height: 27px; }
                :host([open]) {
                    border: 1px solid #1f4e75;
                    border-radius: 3px;
                    background: linear-gradient(160deg, #93c5e8, #5aa3d8 55%, #6db3e2);
                    box-shadow: inset 0 0 0 1px rgba(205, 232, 250, .75);
                }
                :host([stacked]) { box-shadow: inset 0 0 0 1px rgba(205, 232, 250, .75), 2px 0 #7db9e2, 3px 0 #25618f; }
                :host([active]) { background: linear-gradient(160deg, #e6f3fc, #9fcdee); }
            </style>
            <ui-icon name="${this.getAttribute('icon')}" size="${this.getAttribute('size') || 15}"></ui-icon>`;
    }
}

class TaskBar extends HTMLElement {
    connectedCallback() {
        let tray = ['dropboxTray', 'skype', 'film', 'device', 'agent', 'eye', 'schedule', 'box', 'windows', 'avira',
            'grid', 'laptop', 'meter', 'note', 'drive', 'signal', 'flagX', 'plug', 'sound'];
        this.attachShadow({mode: 'open'}).innerHTML = `
            <style>
                :host {
                    display: flex;
                    align-items: center;
                    box-sizing: border-box;
                    height: 28px;
                    border-top: 1px solid #244a6d;
                    background:
                        linear-gradient(rgba(255, 255, 255, .3), transparent 3px),
                        linear-gradient(90deg, #1d588b 0, #215f93 52px, #378bc5 110px, #429bd5 300px, #3c91cd 540px, #2a6aa2 590px, #27629a 720px, #245a8e 960px, #1b4275 1080px, #17396a);
                    color: #fff;
                    font-size: 11.5px;
                }
                .orb {
                    flex: none;
                    width: 34px;
                    height: 34px;
                    margin: -5px 0 -5px 8px;
                    border-radius: 50%;
                    background: radial-gradient(circle at 50% 90%, #4ed1f2, #2878ad 45%, #2c587e 75%);
                    box-shadow: inset 0 0 2px 1px #9bbdd5, inset 0 7px 8px rgba(220, 238, 248, .6), 0 0 1px #123;
                    display: flex;
                    align-items: center;
                    justify-content: center;
                    z-index: 1;
                }
                .grip { flex: none; width: 8px; height: 20px; background: radial-gradient(circle, #123d63 35%, transparent 45%) 0 0 / 3px 3px; }
                task-button { margin-left: var(--gap); width: var(--width, 36px); }
                .tray {
                    flex: none;
                    display: grid;
                    grid-template-columns: repeat(19, 22.44px);
                    align-items: center;
                    justify-items: center;
                    height: 27px;
                    margin-left: 6px;
                    background: linear-gradient(35deg, transparent 40%, rgba(190, 215, 235, .35) 52%, transparent 64%) 110px 0 / 60px 100% no-repeat;
                }
                .show { width: 7px; height: 26px; margin-left: 16px; border: 1px solid #7593b0; background: #3b5f85; box-sizing: border-box; }
                .more { font-size: 15px; margin-top: -13px; }
            </style>
            <div class="orb">
                <svg width="22" height="22" viewBox="0 0 22 22">
                    <path fill="#ec7038" d="M3 5C6 2.500 8.500 3 11 4.500L9.500 10C7 8.500 4.500 8.500 1.500 10z"/>
                    <path fill="#8fc857" d="M12 5C15 6.500 17.500 6 20.500 4L19 9.500C16 11.500 13.500 11.500 10.500 10z"/>
                    <path fill="#72b9ef" d="M1.200 11C4 9.500 6.500 9.500 9.200 11L7.800 16.500C5 15 2.500 15.500 0 17z"/>
                    <path fill="#f8ca46" d="M10.200 11.500C13 13 15.500 13 18.500 11L17 16.500C14 18.500 11.500 18.500 8.700 17z"/>
                </svg>
            </div>
            <span class="grip" style="margin-left:12px"></span>
            <task-button open stacked icon="paint" style="--gap:8px"></task-button>
            <task-button icon="cards" style="--gap:9px"></task-button>
            <task-button icon="ie" size="16" style="--gap:8px"></task-button>
            <task-button icon="media" style="--gap:7px"></task-button>
            <task-button icon="monitor" style="--gap:7px"></task-button>
            <task-button open icon="outlook" style="--gap:5px;--width:40px"></task-button>
            <task-button open stacked active icon="firefox" size="17" style="--gap:3px;--width:33px"></task-button>
            <task-button open stacked icon="excel" style="--gap:10px;--width:33px"></task-button>
            <task-button open icon="purple" style="--gap:10px;--width:40px"></task-button>
            <task-button open stacked icon="folder" size="16" style="--gap:3px;--width:33px"></task-button>
            <span class="grip" style="margin-left:99px"></span>
            <ui-label gap="6" width="41">Desktop</ui-label>
            <ui-icon name="folder" gap="6" size="15"></ui-icon>
            <ui-label gap="4" width="42">Libraries</ui-label>
            <ui-label class="more" gap="34" width="9">»</ui-label>
            <div class="tray">${tray.map(name => `<ui-icon name="${name}" size="14"></ui-icon>`).join('')}</div>
            <ui-label gap="21" width="42">4:35 AM</ui-label>
            <span class="show"></span>`;
    }
}

/*           SCREEN            */
class DesktopScreen extends HTMLElement {
    connectedCallback() {
        this.attachShadow({mode: 'open'}).innerHTML = `
            <style>
                :host { display: grid; grid-template-columns: 1275px 4px; box-sizing: border-box; width: 1280px; height: 720px; padding-left: 1px; position: relative; }
                .screen { display: flex; flex-direction: column; width: 1275px; height: 720px; background: #fff; }
                .view { display: flex; height: 582px; margin-bottom: 21px; }
                .view side-scroll { flex: none; }
                .edge { background: repeating-linear-gradient(#111 0 2px, #777 2px 3px, #222 3px 5px, #999 5px 6px); width: 3px; }
                share-dialog { position: absolute; left: 333px; top: 173px; }
                .click { position: absolute; left: 501px; top: 332px; width: 54px; height: 54px; border-radius: 50%; background: #ff0; mix-blend-mode: multiply; }
                .pointer { position: absolute; left: 525px; top: 359px; }
            </style>
            <div class="screen">
                <browser-tabs></browser-tabs>
                <browser-nav></browser-nav>
                <addon-bar></addon-bar>
                <div class="view"><dropbox-page></dropbox-page><side-scroll></side-scroll></div>
                <task-bar></task-bar>
            </div>
            <div class="edge"></div>
            <share-dialog></share-dialog>
            <div class="click"></div>
            <ui-icon class="pointer" name="pointer" size="15" height="19"></ui-icon>`;
    }
}

customElements.define('ui-icon', UiIcon);
customElements.define('ui-label', UiLabel);
customElements.define('ui-button', UiButton);
customElements.define('browser-tabs', BrowserTabs);
customElements.define('browser-nav', BrowserNav);
customElements.define('addon-bar', AddonBar);
customElements.define('side-scroll', SideScroll);
customElements.define('dropbox-page', DropboxPage);
customElements.define('share-dialog', ShareDialog);
customElements.define('task-button', TaskButton);
customElements.define('task-bar', TaskBar);
customElements.define('desktop-screen', DesktopScreen);
</script>
</body>
</html>
